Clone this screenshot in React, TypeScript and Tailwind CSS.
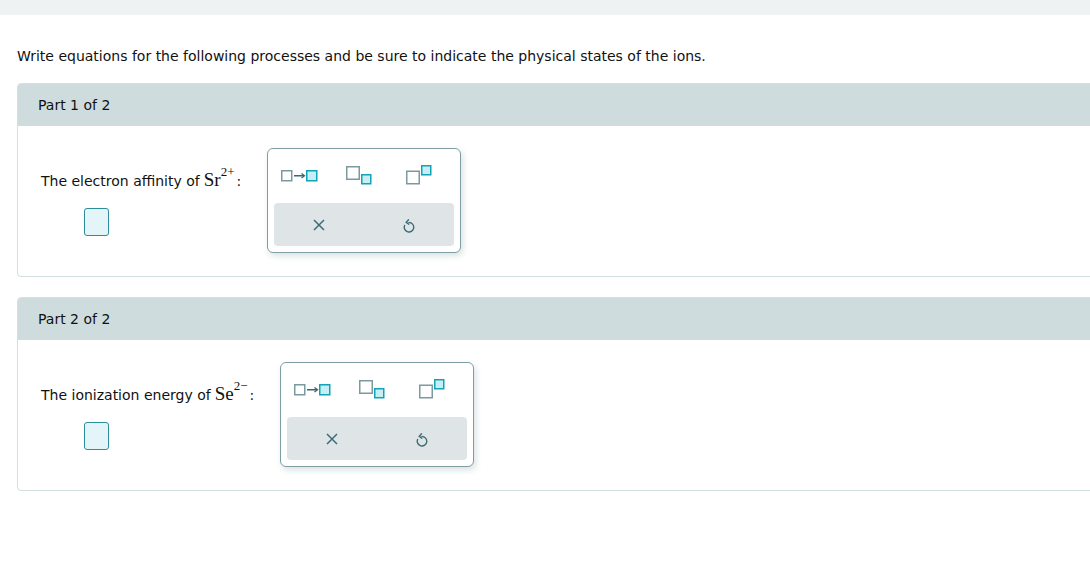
import React from 'react';

const sans = { fontFamily: '"DejaVu Sans", Verdana, sans-serif' };
const serif = { fontFamily: '"Liberation Serif", "Times New Roman", serif' };

function ArrowIcon() {
    return (
        <svg width="37" height="12" viewBox="0 0 37 12">
            <rect x="0.75" y="0.75" width="10" height="10" fill="#fff" stroke="#7b9a9f" strokeWidth="1.5" />
            <path d="M13 5.75 H23" stroke="#3d6770" strokeWidth="1.3" />
            <path d="M20.5 3.5 L23.5 5.75 L20.5 8" fill="none" stroke="#3d6770" strokeWidth="1.3" />
            <rect x="25.75" y="0.75" width="10" height="10" fill="#c6eff5" stroke="#14a2b7" strokeWidth="1.5" />
        </svg>
    );
}

function SubIcon() {
    return (
        <svg width="26" height="19" viewBox="0 0 26 19">
            <rect x="0.75" y="0.75" width="12.5" height="12.5" fill="#fff" stroke="#7b9a9f" strokeWidth="1.5" />
            <rect x="15.75" y="8.75" width="9" height="9" fill="#c6eff5" stroke="#14a2b7" strokeWidth="1.5" />
        </svg>
    );
}

function SupIcon() {
    return (
        <svg width="27" height="20" viewBox="0 0 27 20">
            <rect x="0.75" y="6.25" width="12.5" height="12.5" fill="#fff" stroke="#7b9a9f" strokeWidth="1.5" />
            <rect x="15.75" y="0.75" width="9" height="9" fill="#c6eff5" stroke="#14a2b7" strokeWidth="1.5" />
        </svg>
    );
}

function CloseIcon() {
    return (
        <svg width="12" height="12" viewBox="0 0 12 12">
            <path d="M1 1 L11 11 M11 1 L1 11" stroke="#3d6c77" strokeWidth="1.5" />
        </svg>
    );
}

function UndoIcon() {
    return (
        <svg width="16" height="16" viewBox="0 0 16 16" fill="none" stroke="#3d6c77" strokeWidth="1.4" strokeLinecap="round">
            <path d="M8 5.5 A4.75 4.75 0 1 1 3.6 8.5" />
            <path d="M7.5 2.8 L5.2 5.3 L7.8 7.2" />
        </svg>
    );
}

function Toolbox() {
    return (
        <div className="w-[194px] h-[105px] shrink-0 border border-[#7f9ea3] rounded-[6px] bg-white shadow-[2px_3px_6px_rgba(60,90,100,0.18)] flex flex-col">
            <div className="h-[54px] flex items-center pl-[1px] pb-[2px]">
                <div className="w-[60px] flex justify-center pt-[1px]"><ArrowIcon /></div>
                <div className="w-[60px] flex justify-center pt-[1px]"><SubIcon /></div>
                <div className="w-[60px] flex justify-center"><SupIcon /></div>
            </div>
            <div className="mx-[6px] h-[43px] rounded-[4px] bg-[#dfe5e7] flex items-center">
                <div className="w-[90px] flex justify-center"><CloseIcon /></div>
                <div className="w-[90px] flex justify-center"><UndoIcon /></div>
            </div>
        </div>
    );
}

function Part({ label, text, symbol, charge }: { label: string; text: string; symbol: string; charge: string }) {
    return (
        <div className="w-[1100px] border border-[#d3dfe0] rounded-[4px] overflow-hidden">
            <div className="h-[42px] bg-[#cfdcdd] flex items-center pl-[20px] text-[14px] text-[#111]">{label}</div>
            <div className="flex items-start pt-[22px] pb-[23px] pl-[23px]">
                <div className="pt-[22px] mr-[26px]">
                    <div className="h-[22px] flex items-baseline leading-[20px] text-[14px] text-[#111]">
                        <span>{text}</span>
                        <span style={serif} className="text-[19px] ml-[4px]">{symbol}</span>
                        <span style={serif} className="text-[13px] relative -top-[10px]">{charge}</span>
                        <span className="ml-[2px]">:</span>
                    </div>
                    <div className="mt-[16px] ml-[43px] w-[25px] h-[28px] rounded-[3px] border-[1.5px] border-[#2b8e9a] bg-[#e3f5f8]" />
                </div>
                <Toolbox />
            </div>
        </div>
    );
}

export default function App() {
    return (
        <div style={sans} className="w-[1090px] h-[570px] bg-white overflow-hidden">
            <div className="h-[15px] bg-[#eef2f3]" />
            <p className="mt-[33px] pl-[17px] text-[14px] leading-[17px] text-[#111]">
                Write equations for the following processes and be sure to indicate the physical states of the ions.
            </p>
            <div className="pl-[17px] mt-[18px] flex flex-col gap-[20px]">
                <Part label="Part 1 of 2" text="The electron affinity of" symbol="Sr" charge="2+" />
                <Part label="Part 2 of 2" text="The ionization energy of" symbol="Se" charge="2−" />
            </div>
        </div>
    );
}
